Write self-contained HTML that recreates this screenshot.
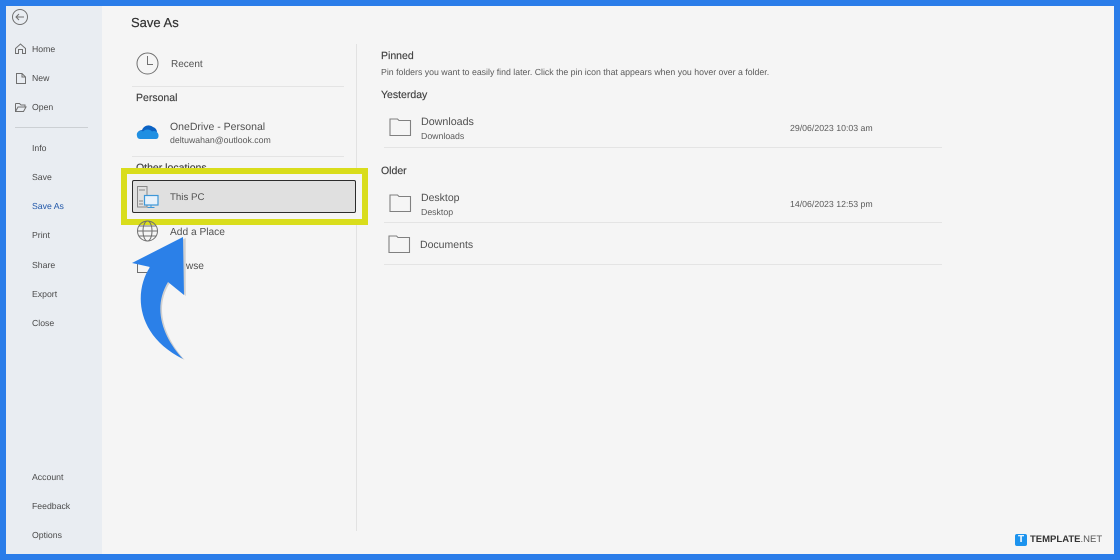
<!DOCTYPE html>
<html><head><meta charset="utf-8"><style>
html,body{margin:0;padding:0}
body{width:1120px;height:560px;overflow:hidden;position:relative;background:#2b7de9;font-family:"Liberation Sans",sans-serif;color:#444;text-rendering:geometricPrecision}
.a{position:absolute;white-space:nowrap;line-height:14px}
.n{font-size:8.700px;left:32px;color:#4a4a4a}
.h{font-size:10.500px;font-weight:400;color:#404040;-webkit-text-stroke:.15px #404040}
.t{font-size:10.500px;color:#505050}
.s{font-size:8.750px;color:#5a5a5a}
.l{position:absolute;height:1px;background:#e4e4e4}
svg{position:absolute;left:0;top:0}
</style></head><body>
<div style="position:absolute;left:6px;top:6px;width:1108px;height:548px;background:#f5f5f5"></div>
<div style="position:absolute;left:6px;top:6px;width:96px;height:548px;background:#e9edf2"></div>
<div class="l" style="left:15px;top:127px;width:73px;background:#ccd0d4"></div>
<div class="a n" style="top:42px">Home</div>
<div class="a n" style="top:71px">New</div>
<div class="a n" style="top:100px">Open</div>
<div class="a n" style="top:141px">Info</div>
<div class="a n" style="top:170px">Save</div>
<div class="a n" style="top:199px;color:#1f56a8">Save As</div>
<div class="a n" style="top:228px">Print</div>
<div class="a n" style="top:258px">Share</div>
<div class="a n" style="top:287px">Export</div>
<div class="a n" style="top:316px">Close</div>
<div class="a n" style="top:470px">Account</div>
<div class="a n" style="top:499px">Feedback</div>
<div class="a n" style="top:528px">Options</div>
<div class="a" style="left:131px;top:15px;font-size:13px;line-height:16px;color:#333;-webkit-text-stroke:.2px #333">Save As</div>
<div class="a t" style="left:171px;top:58px;font-size:10px">Recent</div>
<div class="l" style="left:132px;top:86px;width:212px"></div>
<div class="a h" style="left:136px;top:91px">Personal</div>
<div class="a t" style="left:170px;top:120px">OneDrive - Personal</div>
<div class="a s" style="left:170px;top:133px">deltuwahan@outlook.com</div>
<div class="l" style="left:132px;top:156px;width:212px"></div>
<div class="a h" style="left:136px;top:161px">Other locations</div>
<div class="a t" style="left:170px;top:226px;font-size:10.200px">Add a Place</div>
<div class="a t" style="left:170px;top:260px;font-size:10.200px">Browse</div>
<div style="position:absolute;left:356px;top:44px;width:1px;height:487px;background:#e2e2e2"></div>
<div style="position:absolute;left:121px;top:168px;width:247px;height:57px;box-sizing:border-box;border:6px solid #d9dd1c;background:#f5f5f5"></div>
<div style="position:absolute;left:132px;top:180px;width:224px;height:33px;box-sizing:border-box;border:1.5px solid #2c2c2c;border-radius:2px;background:#e0e0e0"></div>
<div class="a t" style="left:170px;top:191px;font-size:9.700px">This PC</div>
<div class="a h" style="left:381px;top:49px">Pinned</div>
<div class="a s" style="left:381px;top:65px">Pin folders you want to easily find later. Click the pin icon that appears when you hover over a folder.</div>
<div class="a h" style="left:381px;top:88px">Yesterday</div>
<div class="a t" style="left:421px;top:115px;font-size:10.700px">Downloads</div>
<div class="a s" style="left:421px;top:129px">Downloads</div>
<div class="a s" style="left:790px;top:121px">29/06/2023 10:03 am</div>
<div class="l" style="left:384px;top:147px;width:558px"></div>
<div class="a h" style="left:381px;top:164px">Older</div>
<div class="a t" style="left:421px;top:191px">Desktop</div>
<div class="a s" style="left:421px;top:205px">Desktop</div>
<div class="a s" style="left:790px;top:197px">14/06/2023 12:53 pm</div>
<div class="l" style="left:384px;top:222px;width:558px"></div>
<div class="a t" style="left:420px;top:238px">Documents</div>
<div class="l" style="left:384px;top:264px;width:558px"></div>
<svg width="1120" height="560" viewBox="0 0 1120 560" fill="none">
<g stroke="#707070" stroke-width="1">
<circle cx="20" cy="17" r="7.5"/><path d="M16 17H24M19 14L16 17L19 20"/>
<path d="M15.500 48.500L20.500 44L25.500 48.500V53.500H22.500V49.500H18.500V53.500H15.500Z"/>
<path d="M16.500 73.500H22L25.500 77V83.500H16.500ZM22 73.500V77H25.500"/>
<path d="M15.500 103.500H19.500L21 105H25V107M15.500 103.500V111.500H23.500L26 107H18L15.500 111.500"/>
<circle cx="147.500" cy="63.500" r="10.500"/><path d="M147.500 56V64.500H153"/>
<rect x="137.500" y="186.500" width="9.500" height="20.500" stroke="#888"/><path d="M139 190H145M139 201H143M139 204H143" stroke="#888"/>
<circle cx="147.500" cy="231" r="10"/><path d="M137.500 231H157.500M138.500 226H156.500M138.500 236H156.500"/><ellipse cx="147.500" cy="231" rx="4.500" ry="10"/>
<path d="M137.500 263H150V272.500H137.500Z"/>
</g>
<path d="M137 134A5.500 5.500 0 0 1 142 130A7 7 0 0 1 153 127A6 6 0 0 1 157 132L146 136Z" fill="#0b62c4"/>
<path d="M137 136A4 4 0 0 1 143 131.500A6 6 0 0 1 152 131.500A4.500 4.500 0 0 1 158.500 136A3 3 0 0 1 156 139H140A3 3 0 0 1 137 136Z" fill="#1f8fe2"/>
<rect x="144.500" y="195.500" width="13.500" height="9.500" fill="#e8f2fb" stroke="#3d97d8" stroke-width="1.200"/><path d="M151 205V207M147.500 207.500H154.500" stroke="#3d97d8" stroke-width="1"/>
<g stroke="#808080" stroke-width="1.100" fill="#f5f5f5">
<path d="M390 120.500V135.500H410.500V120.500H399L397.500 119H390Z"/>
<path d="M390 196.500V211.500H410.500V196.500H399L397.500 195H390Z"/>
<path d="M389 237.500V252.500H409.500V237.500H398L396.500 236H389Z"/>
</g>
<path d="M185 238L134 263L151 267C135 292 136 336 184 360C166 340 152 310 169 283L185 296Z" fill="#d0d0d0" transform="translate(.7 0)"/>
<path d="M183 237L132 263L150 267C134 291 135 335 183 359C165 340 151 310 168 282L184 295Z" fill="#2b80e8"/>
</svg>
<div style="position:absolute;left:1015px;top:534px;width:12px;height:12px;background:#1c93ee;border-radius:2px;color:#fff;font:bold 10px/12px 'Liberation Sans',sans-serif;text-align:center">T</div>
<div class="a" style="left:1030px;top:534px;font-size:9.500px;line-height:12px;font-weight:bold;color:#333">TEMPLATE<span style="font-weight:400;color:#555">.NET</span></div>
</body></html>
